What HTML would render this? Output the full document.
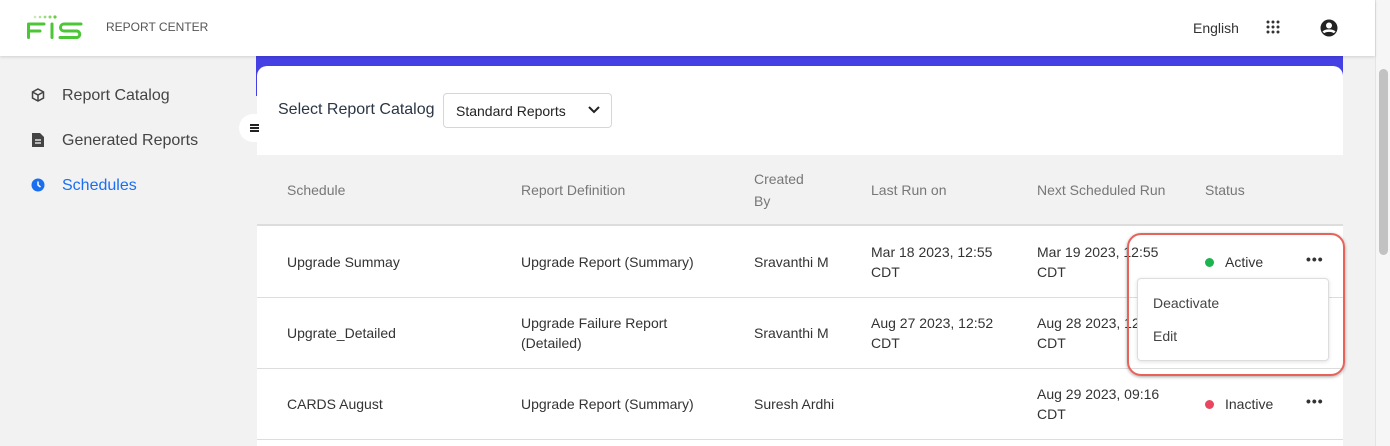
<!DOCTYPE html>
<html><head><style>
*{margin:0;padding:0;box-sizing:border-box}
body{width:1390px;height:446px;overflow:hidden;background:#f2f2f2;font-family:"Liberation Sans",sans-serif;position:relative;color:#333}
.a{position:absolute}
.hdr{left:0;top:0;width:1375px;height:56px;background:#fff;box-shadow:0 1px 3px rgba(0,0,0,.15);z-index:2}
.side{left:0;top:56px;width:256px;height:390px;background:#f2f2f2}
.nav{left:62px;font-size:16px;color:#444}
.band{left:256px;top:56px;width:1087px;height:40px;background:#4540e4}
.card{left:257px;top:66px;width:1086px;height:380px;background:#fff;border-radius:10px 10px 0 0}
.th{left:257px;top:155px;width:1086px;height:71px;background:#f2f2f2;border-bottom:2px solid #ddd}
.t{font-size:14px;color:#333;line-height:20px}
.h{font-size:14px;color:#777;line-height:22px}
.line{left:257px;width:1086px;height:1px;background:#ddd}
.dots{font-size:14px;font-weight:bold;letter-spacing:1px;color:#333}
</style></head><body>
<div class="a hdr">
 <div class="a" style="left:26px;top:14px">
  <svg width="58" height="26" viewBox="0 0 58 26">
   <g fill="#6ecb4a"><circle cx="9" cy="3" r="1.3" opacity=".4"/><circle cx="14" cy="3" r="1.3" opacity=".55"/><circle cx="19" cy="3" r="1.4" opacity=".7"/><circle cx="24" cy="3" r="1.5" opacity=".85"/><circle cx="29" cy="3" r="1.6"/></g>
   <g stroke="#4bc637" stroke-width="3" fill="none" stroke-linecap="round">
    <path d="M2.5 10H18M2.5 10V23.5M2.5 17H14"/>
    <path d="M26 10V23.5"/>
    <path d="M55 10H38a3.5 3.5 0 0 0 0 7h13a3.3 3.3 0 0 1 0 6.5H34"/>
   </g>
  </svg>
 </div>
 <div class="a" style="left:106px;top:20px;font-size:12px;color:#555">REPORT CENTER</div>
 <div class="a" style="left:1193px;top:20px;font-size:14px;color:#333">English</div>
 <div class="a" style="left:1266px;top:20px">
  <svg width="15" height="15" viewBox="0 0 15 15" fill="#333"><circle cx="2" cy="2" r="1.5"/><circle cx="7" cy="2" r="1.5"/><circle cx="12" cy="2" r="1.5"/><circle cx="2" cy="7" r="1.5"/><circle cx="7" cy="7" r="1.5"/><circle cx="12" cy="7" r="1.5"/><circle cx="2" cy="12" r="1.5"/><circle cx="7" cy="12" r="1.5"/><circle cx="12" cy="12" r="1.5"/></svg>
 </div>
 <div class="a" style="left:1320px;top:19px">
  <svg width="18" height="18" viewBox="0 0 18 18"><circle cx="9" cy="9" r="8.5" fill="#222"/><circle cx="9" cy="6.5" r="3" fill="#fff"/><path d="M3.5 13.5c1.5-2.5 9.5-2.5 11 0" stroke="#fff" stroke-width="2.5" fill="none"/></svg>
 </div>
</div>
<div class="a" style="left:1375px;top:0;width:15px;height:446px;background:#f6f6f6;border-left:1px solid #e4e4e4"></div>
<div class="a" style="left:1379px;top:69px;width:9px;height:186px;background:#c2c2c2;border-radius:5px"></div>
<div class="a side"></div>
<svg class="a" style="left:31px;top:88px" width="14" height="14" viewBox="0 0 14 14" fill="none" stroke="#444" stroke-width="1.5"><path d="M7 1l5.5 3v6L7 13 1.5 10V4z M1.5 4L7 7l5.5-3 M7 7v6"/></svg>
<div class="a nav" style="top:87px">Report Catalog</div>
<svg class="a" style="left:32px;top:133px" width="12" height="14" viewBox="0 0 12 14"><path d="M0 0h8l4 4v10H0z" fill="#444"/><path d="M3 7h6M3 10h6" stroke="#fff" stroke-width="1.2"/></svg>
<div class="a nav" style="top:132px">Generated Reports</div>
<svg class="a" style="left:31px;top:178px" width="14" height="14" viewBox="0 0 14 14"><circle cx="7" cy="7" r="6.5" fill="#1a6ff0"/><path d="M7 3.5V7l2.5 2" stroke="#fff" stroke-width="1.5" fill="none"/></svg>
<div class="a nav" style="top:177px;color:#1a6ff0">Schedules</div>
<div class="a band"></div>
<div class="a card"></div>
<div class="a" style="left:239px;top:114px;width:30px;height:28px;border-radius:14px 0 0 14px;background:#fff"></div>
<div class="a" style="left:250px;top:124px;width:9px;font-size:10px;line-height:4px">
 <div style="height:1.5px;background:#222;margin-bottom:1.5px"></div><div style="height:1.5px;background:#222;margin-bottom:1.5px"></div><div style="height:1.5px;background:#222"></div></div>
<div class="a" style="left:278px;top:101px;font-size:16px;color:#2b3645">Select Report Catalog</div>
<div class="a" style="left:443px;top:93px;width:169px;height:35px;border:1px solid #d6d6d6;border-radius:4px"></div>
<div class="a" style="left:456px;top:103px;font-size:14px;color:#222">Standard Reports</div>
<svg class="a" style="left:588px;top:106px" width="12" height="8" viewBox="0 0 12 8"><path d="M1 1l5 5 5-5" stroke="#222" stroke-width="2" fill="none"/></svg>
<div class="a th"></div>
<div class="a h" style="left:287px;top:179px">Schedule</div>
<div class="a h" style="left:521px;top:179px">Report Definition</div>
<div class="a h" style="left:754px;top:168px">Created<br>By</div>
<div class="a h" style="left:871px;top:179px">Last Run on</div>
<div class="a h" style="left:1037px;top:179px">Next Scheduled Run</div>
<div class="a h" style="left:1205px;top:179px">Status</div>

<div class="a line" style="top:297px"></div>
<div class="a line" style="top:368px"></div>
<div class="a line" style="top:439px"></div>

<div class="a t" style="left:287px;top:252px">Upgrade Summay</div>
<div class="a t" style="left:521px;top:252px">Upgrade Report (Summary)</div>
<div class="a t" style="left:754px;top:252px">Sravanthi M</div>
<div class="a t" style="left:871px;top:242px">Mar 18 2023, 12:55<br>CDT</div>
<div class="a t" style="left:1037px;top:242px">Mar 19 2023, 12:55<br>CDT</div>
<div class="a" style="left:1205px;top:258px;width:9px;height:9px;border-radius:50%;background:#1db34f"></div>
<div class="a t" style="left:1225px;top:252px">Active</div>
<div class="a dots" style="left:1306px;top:251px">•••</div>

<div class="a t" style="left:287px;top:323px">Upgrate_Detailed</div>
<div class="a t" style="left:521px;top:313px">Upgrade Failure Report<br>(Detailed)</div>
<div class="a t" style="left:754px;top:323px">Sravanthi M</div>
<div class="a t" style="left:871px;top:313px">Aug 27 2023, 12:52<br>CDT</div>
<div class="a t" style="left:1037px;top:313px">Aug 28 2023, 12:52<br>CDT</div>

<div class="a t" style="left:287px;top:394px">CARDS August</div>
<div class="a t" style="left:521px;top:394px">Upgrade Report (Summary)</div>
<div class="a t" style="left:754px;top:394px">Suresh Ardhi</div>
<div class="a t" style="left:1037px;top:384px">Aug 29 2023, 09:16<br>CDT</div>
<div class="a" style="left:1205px;top:400px;width:9px;height:9px;border-radius:50%;background:#e8475f"></div>
<div class="a t" style="left:1225px;top:394px">Inactive</div>
<div class="a dots" style="left:1306px;top:393px">•••</div>

<div class="a" style="left:1137px;top:278px;width:192px;height:83px;background:#fff;border:1px solid #ddd;border-radius:4px;box-shadow:0 1px 4px rgba(0,0,0,.12)"></div>
<div class="a t" style="left:1153px;top:293px;color:#444">Deactivate</div>
<div class="a t" style="left:1153px;top:326px;color:#444">Edit</div>
<div class="a" style="left:1127px;top:233px;width:218px;height:143px;border:2px solid #e8625a;border-radius:14px;box-shadow:0 1px 3px rgba(0,0,0,.35)"></div>
</body></html>
